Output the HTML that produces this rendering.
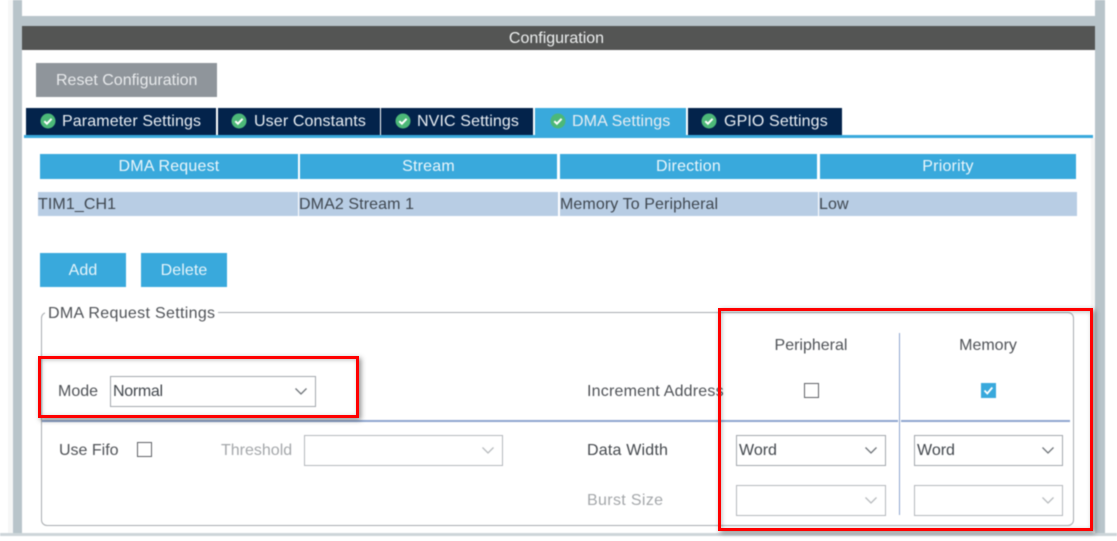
<!DOCTYPE html>
<html>
<head>
<meta charset="utf-8">
<style>
html,body{margin:0;padding:0;background:#fff;}
body{width:1117px;height:541px;overflow:hidden;position:relative;font-family:"Liberation Sans",sans-serif;font-size:16px;color:#4f5257;}
#w{position:absolute;left:0;top:0;width:1117px;height:541px;filter:blur(.4px);}
.a{position:absolute;}
.t{position:absolute;white-space:nowrap;line-height:20px;}
.c{text-align:center;}
.tab{position:absolute;top:108px;height:27px;background:#03234b;color:#e8edf2;}
.tab .t{top:4px;letter-spacing:.12px;}
.tab svg{position:absolute;top:5px;width:16px;height:16px;}
.h{position:absolute;top:154px;height:25px;background:#39a9dc;color:#eaf6fb;text-align:center;line-height:26px;letter-spacing:.2px;}
.r{position:absolute;top:192px;height:24px;background:#b8cde4;color:#3f4750;line-height:25px;white-space:nowrap;letter-spacing:.1px;}
.b{position:absolute;top:253px;width:86px;height:34px;background:#39a9dc;color:#e6f5fb;text-align:center;line-height:35px;letter-spacing:.1px;}
.s{position:absolute;box-sizing:border-box;height:31px;border:1px solid #a3a8ad;background:#fff;color:#42474d;line-height:30px;padding-left:2px;}
.s.d{border:1px solid #b4b8bc;}
.s svg{position:absolute;right:7px;top:10px;width:14px;height:9px;}
.cb{position:absolute;box-sizing:border-box;width:15px;height:15px;border:1.5px solid #5f6266;background:#fff;}
.rb{position:absolute;box-sizing:border-box;border:3px solid #ff0000;box-shadow:2px 2px 5px rgba(0,0,0,.45),inset 1px 1px 4px rgba(0,0,0,.25);}
</style>
</head>
<body>
<div id="w">
<!-- frame -->
<div class="a" style="left:8px;top:0;width:5px;height:534px;background:#f6f7f7"></div>
<div class="a" style="left:13px;top:0;width:9px;height:534px;background:#b8c4ca"></div>
<div class="a" style="left:1095px;top:0;width:10px;height:534px;background:#b8c4ca"></div>
<div class="a" style="left:13px;top:16px;width:1092px;height:10px;background:#b8c4ca"></div>
<div class="a" style="left:1091px;top:138px;width:4px;height:396px;background:#f6f6f6"></div>
<div class="a" style="left:0;top:533px;width:1117px;height:3px;background:#cdd5d9"></div>
<div class="a" style="left:22px;top:26px;width:1073px;height:24px;background:#545554"></div>
<div class="t c" style="left:22px;top:29px;width:1069px;color:#eceeee;font-size:16px">Configuration</div>

<div class="a" style="left:36px;top:63px;width:181px;height:34px;background:#8f959b"></div>
<div class="t" style="left:56px;top:71px;color:#e8eaec;letter-spacing:0">Reset Configuration</div>

<!-- tabs -->
<div class="a" style="left:24px;top:135px;width:1069px;height:3px;background:#39a9dc"></div>
<div class="tab" style="left:26px;width:190px"><svg style="left:14px" viewBox="0 0 16 16"><circle cx="8" cy="8" r="7.5" fill="#4cb878"/><path d="M4.300 8.200l2.600 2.500 4.700-4.900" fill="none" stroke="#fff" stroke-width="2"/></svg><div class="t" style="left:36px">Parameter Settings</div></div>
<div class="tab" style="left:218px;width:162px"><svg style="left:13px" viewBox="0 0 16 16"><circle cx="8" cy="8" r="7.5" fill="#4cb878"/><path d="M4.300 8.200l2.600 2.500 4.700-4.900" fill="none" stroke="#fff" stroke-width="2"/></svg><div class="t" style="left:36px">User Constants</div></div>
<div class="tab" style="left:381px;width:152px"><svg style="left:14px" viewBox="0 0 16 16"><circle cx="8" cy="8" r="7.5" fill="#4cb878"/><path d="M4.300 8.200l2.600 2.500 4.700-4.900" fill="none" stroke="#fff" stroke-width="2"/></svg><div class="t" style="left:36px">NVIC Settings</div></div>
<div class="tab" style="left:535px;width:151px;background:#39a9dc"><svg style="left:15px" viewBox="0 0 16 16"><circle cx="8" cy="8" r="7.5" fill="#4cb878"/><path d="M4.300 8.200l2.600 2.500 4.700-4.900" fill="none" stroke="#fff" stroke-width="2"/></svg><div class="t" style="left:37px">DMA Settings</div></div>
<div class="tab" style="left:688px;width:154px"><svg style="left:13px" viewBox="0 0 16 16"><circle cx="8" cy="8" r="7.5" fill="#4cb878"/><path d="M4.300 8.200l2.600 2.500 4.700-4.900" fill="none" stroke="#fff" stroke-width="2"/></svg><div class="t" style="left:36px">GPIO Settings</div></div>

<!-- table -->
<div class="h" style="left:40px;width:258px">DMA Request</div>
<div class="h" style="left:300px;width:257px">Stream</div>
<div class="h" style="left:560px;width:257px">Direction</div>
<div class="h" style="left:820px;width:256px">Priority</div>
<div class="r" style="left:38px;width:260px">TIM1_CH1</div>
<div class="r" style="left:299px;width:259px">DMA2 Stream 1</div>
<div class="r" style="left:560px;width:258px">Memory To Peripheral</div>
<div class="r" style="left:819px;width:258px">Low</div>

<div class="b" style="left:40px">Add</div>
<div class="b" style="left:141px">Delete</div>

<!-- fieldset -->
<div class="a" style="left:41px;top:312px;width:1033px;height:214px;box-sizing:border-box;border:1px solid #a8acb0;border-radius:6px"></div>
<div class="t" style="left:45px;top:304px;background:#fff;padding:0 3px;letter-spacing:.32px">DMA Request Settings</div>

<div class="t" style="left:58px;top:382px">Mode</div>
<div class="s" style="left:110px;top:376px;width:206px;letter-spacing:-.3px">Normal<svg viewBox="0 0 14 9"><path d="M1.500 1.500L7 7l5.500-5.500" fill="none" stroke="#70757a" stroke-width="1.300"/></svg></div>
<div class="t" style="left:587px;top:382px;letter-spacing:.2px">Increment Address</div>

<div class="a" style="left:42px;top:420px;width:856px;height:1.500px;background:#8ea6cf"></div>
<div class="a" style="left:901px;top:420px;width:169px;height:1.500px;background:#8ea6cf"></div>
<div class="a" style="left:898.500px;top:333px;width:1.500px;height:182px;background:#8ea6cf"></div>

<div class="t" style="left:59px;top:441px">Use Fifo</div>
<div class="cb" style="left:137px;top:442px"></div>
<div class="t" style="left:221px;top:441px;color:#a4a7aa">Threshold</div>
<div class="s d" style="left:304px;top:435px;width:199px"><svg viewBox="0 0 14 9"><path d="M1.500 1.500L7 7l5.500-5.500" fill="none" stroke="#b8bbbe" stroke-width="1.300"/></svg></div>

<div class="t c" style="left:736px;top:336px;width:150px">Peripheral</div>
<div class="t c" style="left:914px;top:336px;width:148px">Memory</div>
<div class="cb" style="left:803.500px;top:383px"></div>
<div class="a" style="left:981px;top:383px;width:15px;height:15px;background:#39a9dc"><svg width="15" height="15" viewBox="0 0 15 15" style="display:block"><path d="M3.500 7.500l2.800 3 5-6" fill="none" stroke="#fff" stroke-width="1.800"/></svg></div>

<div class="t" style="left:587px;top:441px;color:#45494e;letter-spacing:.2px">Data Width</div>
<div class="s" style="left:736px;top:435px;width:150px">Word<svg viewBox="0 0 14 9"><path d="M1.500 1.500L7 7l5.500-5.500" fill="none" stroke="#70757a" stroke-width="1.300"/></svg></div>
<div class="s" style="left:914px;top:435px;width:149px">Word<svg viewBox="0 0 14 9"><path d="M1.500 1.500L7 7l5.500-5.500" fill="none" stroke="#70757a" stroke-width="1.300"/></svg></div>
<div class="t" style="left:587px;top:491px;color:#a4a7aa;letter-spacing:.35px">Burst Size</div>
<div class="s d" style="left:736px;top:485px;width:150px"><svg viewBox="0 0 14 9"><path d="M1.500 1.500L7 7l5.500-5.500" fill="none" stroke="#b8bbbe" stroke-width="1.300"/></svg></div>
<div class="s d" style="left:914px;top:485px;width:149px"><svg viewBox="0 0 14 9"><path d="M1.500 1.500L7 7l5.500-5.500" fill="none" stroke="#b8bbbe" stroke-width="1.300"/></svg></div>
</div>
<!-- red annotation boxes -->
<div class="rb" style="left:38px;top:356px;width:321px;height:62px"></div>
<div class="rb" style="left:718px;top:308px;width:375px;height:223px"></div>
</body>
</html>
